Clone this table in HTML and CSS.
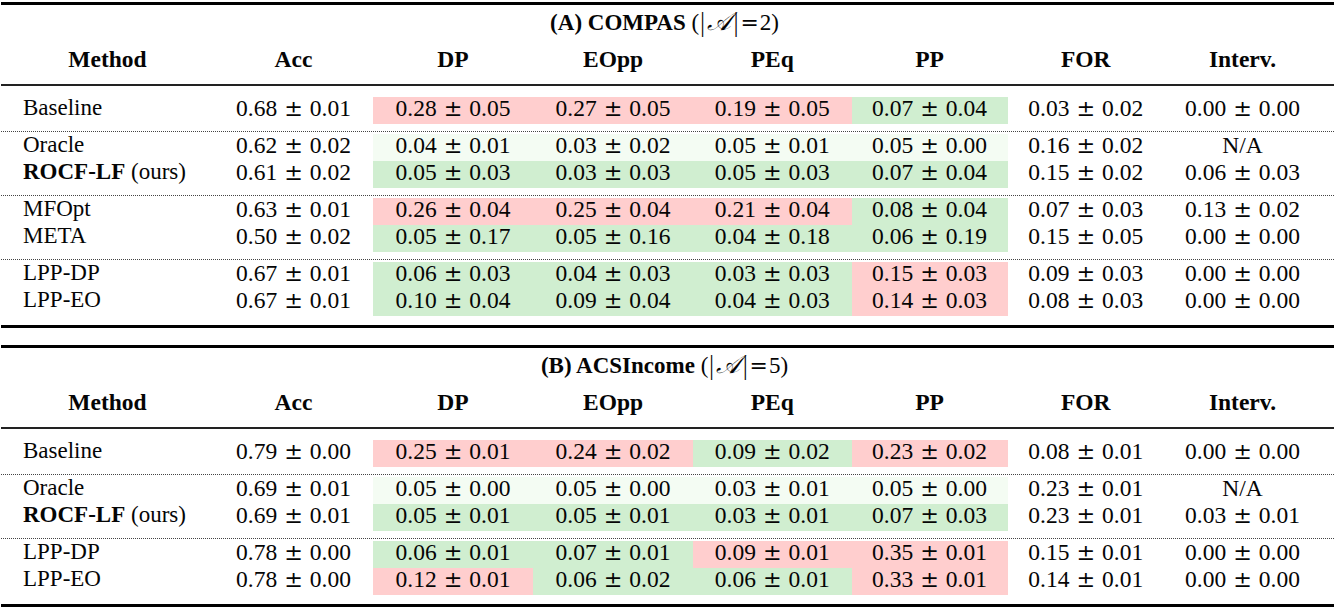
FILE: index.html
```html
<!DOCTYPE html>
<html>
<head>
<meta charset="utf-8">
<link rel="stylesheet" href="styles.css">
</head>
<body>
<div class="tbl">
  <div class="title"><b>(A) COMPAS</b> <span class="math">(<span class="bar">|</span><span class="cal">𝒜</span><span class="bar">|</span><span class="eq">=</span>2)</span></div>
  <div class="row head"><div>Method</div><div>Acc</div><div>DP</div><div>EOpp</div><div>PEq</div><div>PP</div><div>FOR</div><div>Interv.</div></div>
  <div class="body">
    <div class="group">
      <div class="row"><div>Baseline</div><div>0.68<span class="pm">±</span>0.01</div><div class="r">0.28<span class="pm">±</span>0.05</div><div class="r">0.27<span class="pm">±</span>0.05</div><div class="r">0.19<span class="pm">±</span>0.05</div><div class="g">0.07<span class="pm">±</span>0.04</div><div>0.03<span class="pm">±</span>0.02</div><div>0.00<span class="pm">±</span>0.00</div></div>
    </div>
    <div class="group">
      <div class="row"><div>Oracle</div><div>0.62<span class="pm">±</span>0.02</div><div class="l">0.04<span class="pm">±</span>0.01</div><div class="l">0.03<span class="pm">±</span>0.02</div><div class="l">0.05<span class="pm">±</span>0.01</div><div class="l">0.05<span class="pm">±</span>0.00</div><div>0.16<span class="pm">±</span>0.02</div><div>N/A</div></div>
      <div class="row"><div><b>ROCF-LF</b> (ours)</div><div>0.61<span class="pm">±</span>0.02</div><div class="g">0.05<span class="pm">±</span>0.03</div><div class="g">0.03<span class="pm">±</span>0.03</div><div class="g">0.05<span class="pm">±</span>0.03</div><div class="g">0.07<span class="pm">±</span>0.04</div><div>0.15<span class="pm">±</span>0.02</div><div>0.06<span class="pm">±</span>0.03</div></div>
    </div>
    <div class="group">
      <div class="row"><div>MFOpt</div><div>0.63<span class="pm">±</span>0.01</div><div class="r">0.26<span class="pm">±</span>0.04</div><div class="r">0.25<span class="pm">±</span>0.04</div><div class="r">0.21<span class="pm">±</span>0.04</div><div class="g">0.08<span class="pm">±</span>0.04</div><div>0.07<span class="pm">±</span>0.03</div><div>0.13<span class="pm">±</span>0.02</div></div>
      <div class="row"><div>META</div><div>0.50<span class="pm">±</span>0.02</div><div class="g">0.05<span class="pm">±</span>0.17</div><div class="g">0.05<span class="pm">±</span>0.16</div><div class="g">0.04<span class="pm">±</span>0.18</div><div class="g">0.06<span class="pm">±</span>0.19</div><div>0.15<span class="pm">±</span>0.05</div><div>0.00<span class="pm">±</span>0.00</div></div>
    </div>
    <div class="group">
      <div class="row"><div>LPP-DP</div><div>0.67<span class="pm">±</span>0.01</div><div class="g">0.06<span class="pm">±</span>0.03</div><div class="g">0.04<span class="pm">±</span>0.03</div><div class="g">0.03<span class="pm">±</span>0.03</div><div class="r">0.15<span class="pm">±</span>0.03</div><div>0.09<span class="pm">±</span>0.03</div><div>0.00<span class="pm">±</span>0.00</div></div>
      <div class="row"><div>LPP-EO</div><div>0.67<span class="pm">±</span>0.01</div><div class="g">0.10<span class="pm">±</span>0.04</div><div class="g">0.09<span class="pm">±</span>0.04</div><div class="g">0.04<span class="pm">±</span>0.03</div><div class="r">0.14<span class="pm">±</span>0.03</div><div>0.08<span class="pm">±</span>0.03</div><div>0.00<span class="pm">±</span>0.00</div></div>
    </div>
  </div>
</div>

<div class="tbl second">
  <div class="title"><b>(B) ACSIncome</b> <span class="math">(<span class="bar">|</span><span class="cal">𝒜</span><span class="bar">|</span><span class="eq">=</span>5)</span></div>
  <div class="row head"><div>Method</div><div>Acc</div><div>DP</div><div>EOpp</div><div>PEq</div><div>PP</div><div>FOR</div><div>Interv.</div></div>
  <div class="body">
    <div class="group">
      <div class="row"><div>Baseline</div><div>0.79<span class="pm">±</span>0.00</div><div class="r">0.25<span class="pm">±</span>0.01</div><div class="r">0.24<span class="pm">±</span>0.02</div><div class="g">0.09<span class="pm">±</span>0.02</div><div class="r">0.23<span class="pm">±</span>0.02</div><div>0.08<span class="pm">±</span>0.01</div><div>0.00<span class="pm">±</span>0.00</div></div>
    </div>
    <div class="group">
      <div class="row"><div>Oracle</div><div>0.69<span class="pm">±</span>0.01</div><div class="l">0.05<span class="pm">±</span>0.00</div><div class="l">0.05<span class="pm">±</span>0.00</div><div class="l">0.03<span class="pm">±</span>0.01</div><div class="l">0.05<span class="pm">±</span>0.00</div><div>0.23<span class="pm">±</span>0.01</div><div>N/A</div></div>
      <div class="row"><div><b>ROCF-LF</b> (ours)</div><div>0.69<span class="pm">±</span>0.01</div><div class="g">0.05<span class="pm">±</span>0.01</div><div class="g">0.05<span class="pm">±</span>0.01</div><div class="g">0.03<span class="pm">±</span>0.01</div><div class="g">0.07<span class="pm">±</span>0.03</div><div>0.23<span class="pm">±</span>0.01</div><div>0.03<span class="pm">±</span>0.01</div></div>
    </div>
    <div class="group">
      <div class="row"><div>LPP-DP</div><div>0.78<span class="pm">±</span>0.00</div><div class="g">0.06<span class="pm">±</span>0.01</div><div class="g">0.07<span class="pm">±</span>0.01</div><div class="r">0.09<span class="pm">±</span>0.01</div><div class="r">0.35<span class="pm">±</span>0.01</div><div>0.15<span class="pm">±</span>0.01</div><div>0.00<span class="pm">±</span>0.00</div></div>
      <div class="row"><div>LPP-EO</div><div>0.78<span class="pm">±</span>0.00</div><div class="r">0.12<span class="pm">±</span>0.01</div><div class="g">0.06<span class="pm">±</span>0.02</div><div class="g">0.06<span class="pm">±</span>0.01</div><div class="r">0.33<span class="pm">±</span>0.01</div><div>0.14<span class="pm">±</span>0.01</div><div>0.00<span class="pm">±</span>0.00</div></div>
    </div>
  </div>
</div>
</body>
</html>
```
FILE: styles.css
```css
html, body {
  margin: 0;
  background: #ffffff;
}
body {
  padding: 2px 2px 0 1px;
  font-family: "Liberation Serif", "Times New Roman", serif;
  font-size: 23px;
  color: #050505;
}
.tbl {
  width: 1333px;
  border-top: 3px solid #000;
  border-bottom: 3px solid #000;
}
.tbl.second {
  margin-top: 17px;
}
.title {
  height: 36px;
  line-height: 36px;
  text-align: center;
  padding-right: 6px;
}
.math {
  font-weight: normal;
}
.bar {
  display: inline-block;
  transform: scaleY(1.15);
  padding: 0 1px;
}
.cal {
  font-style: italic;
  font-size: 1.1em;
  line-height: 20px;
  padding: 0 2px 0 1px;
}
.eq {
  margin: 0 1px;
  font-family: "DejaVu Serif", serif;
  font-size: 0.95em;
}
.row {
  display: grid;
  grid-template-columns: 213px 159px 160px 160px 158.5px 156px 156.5px 157px;
}
.row > div {
  text-align: center;
  white-space: nowrap;
}
.row > div:first-child {
  text-align: left;
  padding-left: 22px;
}
.head {
  height: 36px;
  line-height: 36px;
  padding-bottom: 7px;
  border-bottom: 2px solid #222;
  font-weight: bold;
  font-size: 23.5px;
}
.head > div:first-child {
  text-align: center;
  padding-left: 0;
}
.body {
  padding-top: 11px;
}
.group {
  padding-bottom: 7px;
}
.group + .group {
  border-top: 1px dotted #444;
  padding-top: 2px;
}
.group:last-child {
  padding-bottom: 9px;
}
.body .row > div {
  height: 27px;
  line-height: 22px;
  padding-bottom: 5px;
  box-sizing: border-box;
}
.body .row > div + div {
  font-size: 23.5px;
}
.pm {
  font-family: "DejaVu Serif", serif;
  font-size: 0.95em;
  line-height: 20px;
  margin: 0 7px;
}
.r { background: #ffcece; }
.g { background: #d0eed0; }
.l { background: #f4fcf3; }
```
